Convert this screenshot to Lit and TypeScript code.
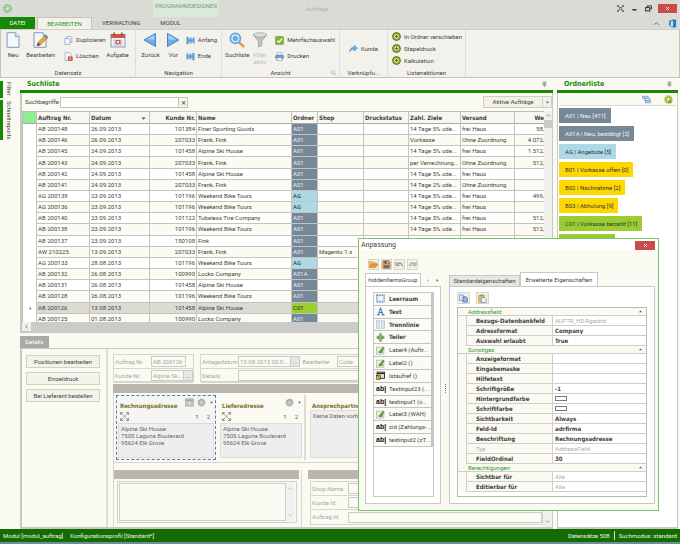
import { LitElement, html, css, svg, nothing, type TemplateResult } from "lit";
import { customElement } from "lit/decorators.js";
import { classMap } from "lit/directives/class-map.js";

const ICONS: Record<string, TemplateResult> = {
  gear: svg`<circle cx="8" cy="8" r="6.6" fill="none" stroke="#4bb356" stroke-width="1.8" stroke-dasharray="2.4 1.8"/><circle cx="8" cy="8" r="5.2" fill="#e9f5e6" stroke="#4bb356" stroke-width="1.4"/><circle cx="8" cy="8" r="2.2" fill="#fff" stroke="#4bb356" stroke-width="1.4"/>`,
  doc: svg`<path d="M2 .7h8.2L14 4.6v10.7H2z" fill="#f4f8fd" stroke="#8298b4"/><path d="M10.2.7v3.9H14" fill="#d6e2f0" stroke="#8298b4" stroke-width=".8"/>`,
  edit: svg`<path d="M1 .7h9L13 4v11.3H1z" fill="#f4f8fd" stroke="#8298b4"/><path d="M10 .7V4h3" fill="#d6e2f0" stroke="#8298b4" stroke-width=".8"/><path d="M4 14l1-3.6L12.6 3 15 5.4l-7.6 7.5z" fill="#f2a63b" stroke="#a4641a" stroke-width=".7"/><path d="M4 14l1-3.6 2.5 2.4z" fill="#555"/><path d="M11.3 4.2L12.6 3 15 5.4l-1.2 1.3z" fill="#5a86c8"/>`,
  copy: svg`<path d="M5 1h7l2 2v8H5z" fill="#e6effa" stroke="#6f8fbd"/><path d="M1.5 4.5h7l2 2v8.5h-9z" fill="#f3f8fe" stroke="#6f8fbd"/>`,
  del: svg`<path d="M2 1h8l3 3v11H2z" fill="#f1f6fc" stroke="#7e93b0"/><rect x="7" y="8" width="8.4" height="7.4" rx="1" fill="#d8402c"/><path d="M9.4 10l3.6 3.6M13 10l-3.6 3.6" stroke="#fff" stroke-width="1.3"/>`,
  calendar: svg`<rect x="1" y="2.5" width="14" height="12.5" fill="#eef2f7" stroke="#8093ad" stroke-width=".9"/><rect x="1" y="2" width="14" height="4" fill="#cf5645"/><path d="M4.2.4v3M11.8.4v3" stroke="#77584f" stroke-width="1.5"/><path d="M3 8.5h10M3 11h10M3 13.2h10M5 7v7M8 7v7M11 7v7" stroke="#b8c6d6" stroke-width=".7"/><rect x="5.6" y="8" width="5" height="4.2" fill="#d75b4a"/><rect x="7.1" y="9.2" width="2" height="1.8" fill="#fff"/>`,
  left: svg`<path d="M13.5 1.5v13L2 8z" fill="#6aaee8" stroke="#3b7cc2" stroke-width=".9"/><path d="M12.5 3v4.5H4.6z" fill="#a7d3f6"/>`,
  right: svg`<path d="M2.5 1.5v13L14 8z" fill="#6aaee8" stroke="#3b7cc2" stroke-width=".9"/><path d="M3.5 3v4.5h7.9z" fill="#a7d3f6"/>`,
  first: svg`<path d="M1.5 2h2.6v12H1.5zM9.2 2.5v11L4 8zM14.6 2.5v11L9 8z" fill="#6aaee8" stroke="#3b7cc2" stroke-width=".9"/>`,
  last: svg`<path d="M14.5 2h-2.6v12h2.6zM6.8 2.5v11L12 8zM1.4 2.5v11L7 8z" fill="#6aaee8" stroke="#3b7cc2" stroke-width=".9"/>`,
  search: svg`<path d="M10 10.2l4.4 4.2" stroke="#dd9455" stroke-width="2.4" stroke-linecap="round"/><circle cx="6.4" cy="6.4" r="5" fill="#d3ebfb" stroke="#6d9fd6" stroke-width="1.8"/><circle cx="6.4" cy="6.4" r="2.6" fill="#63aef0"/>`,
  funnel: svg`<path d="M1.5 3.2L6.4 9v6l3.4-1.5V9l4.7-5.8z" fill="#c2c2c2" stroke="#9a9a9a" stroke-width=".7"/><ellipse cx="8" cy="3" rx="6.6" ry="2.2" fill="#dedede" stroke="#9d9d9d" stroke-width=".8"/>`,
  check: svg`<rect x="1" y="1" width="14" height="14" rx="1" fill="#7fb93a" stroke="#5f9427"/><path d="M4 8.2l3 3.2 5.4-6.8" fill="none" stroke="#fff" stroke-width="2.2"/>`,
  print: svg`<path d="M4 1h8v5H4z" fill="#fff" stroke="#7e93c0"/><rect x="1" y="5.6" width="14" height="6.4" rx="2.4" fill="#7d98d2" stroke="#4a66a6"/><path d="M4 10h8l1 5H3z" fill="#f4f7fd" stroke="#6d80b0"/>`,
  share: svg`<path d="M1.4 14C1.2 8.4 4.4 5.6 9 5.6V2.2L15 7.4 9 12.4V9.2c-3.600-.1-5.900 1.200-7.600 4.800z" fill="#69b0e6" stroke="#3c80bb" stroke-width=".9"/>`,
  plus: svg`<circle cx="8" cy="8" r="7" fill="#a8c81e" stroke="#555f1a" stroke-width="1.6"/><circle cx="8" cy="8" r="4.600" fill="#f4f8d8" stroke="#5c6a18" stroke-width=".9"/><path d="M8 5v6M5 8h6" stroke="#4d7a12" stroke-width="1.9"/>`,
  launch: svg`<path d="M2 14V3h11" fill="none" stroke="#888" stroke-width="1.400"/><path d="M6 7l7 7M13 8v6H7" fill="none" stroke="#888" stroke-width="1.400"/>`,
  frame: svg`<path d="M1 4.500V1h3.500M11.500 1H15v3.500M15 11.500V15h-3.500M4.500 15H1v-3.500M1 1l4 4M15 1l-4 4M15 15l-4-4M1 15l4-4" fill="none" stroke="#444" stroke-width="1.500"/><rect x="5" y="5" width="6" height="6" fill="none" stroke="#444" stroke-width="1.400"/>`,
  min: svg`<path d="M3 11h10" stroke="#222" stroke-width="3"/>`,
  restore: svg`<path d="M5 5V2h10v7h-3" fill="none" stroke="#222" stroke-width="2"/><rect x="1.500" y="6" width="9.500" height="7.500" fill="none" stroke="#222" stroke-width="2.200"/>`,
  close: svg`<path d="M3 3l10 10M13 3L3 13" stroke="#fff" stroke-width="2.600"/>`,
  up: svg`<path d="M2.500 11L8 5.500l5.500 5.500" fill="none" stroke="#555" stroke-width="1.800"/>`,
  down: svg`<path d="M2.500 5L8 10.500 13.500 5" fill="none" stroke="#555" stroke-width="1.800"/>`,
  prev: svg`<path d="M11 2.500L5.500 8l5.500 5.500" fill="none" stroke="#444" stroke-width="2"/>`,
  office: svg`<path d="M2 3.500L10 .5l4.500 1.300v12.400L10 15.500 2 12.500l7 .7V3L5 4v7.200l-3 1.300z" fill="#1e7fd0"/>`,
  pin: svg`<path d="M4 2.500h8M5 3v6M10 3v6M3 9.500h10M8 10v4M8.600 3v6" fill="none" stroke="#777" stroke-width="1.600"/>`,
  caret: svg`<path d="M3 5.500h10L8 11z" fill="#555"/>`,
  caretUp: svg`<path d="M3 10.500h10L8 5z" fill="#555"/>`,
  marker: svg`<path d="M5 3v10l6-5z" fill="#666"/>`,
  markerL: svg`<path d="M11 3v10L5 8z" fill="#bbb"/>`,
  rows: svg`<rect x="1" y="2" width="10" height="4" fill="#a9cbe9" stroke="#5c94c8" stroke-width=".9"/><rect x="4" y="6" width="10" height="4" fill="#d5e6f5" stroke="#5c94c8" stroke-width=".9"/><rect x="6" y="10" width="9" height="4" fill="#a9cbe9" stroke="#5c94c8" stroke-width=".9"/>`,
  cog: svg`<circle cx="8" cy="8" r="6.200" fill="#b6cf4c" stroke="#8aa62d" stroke-width="2.600" stroke-dasharray="2.600 1.600"/><circle cx="8" cy="8" r="5.400" fill="#b6cf4c"/><circle cx="8" cy="8" r="2.600" fill="#fff" stroke="#7d9826"/><path d="M11 9v6M8.500 12.500h5" stroke="#5f9427" stroke-width="2"/>`,
  open: svg`<path d="M1 13.500V3h5l1.500 2H13v2.500" fill="#f6c264" stroke="#d0801d"/><path d="M1 13.500L4.500 7h11L12 13.500z" fill="#f2943a" stroke="#c96d14"/>`,
  save: svg`<path d="M1.500 1.500h11l2 2v11h-13z" fill="#f0a13a" stroke="#7b5a2e"/><rect x="4" y="1.500" width="7.500" height="5" fill="#5b5b62"/><rect x="3.500" y="9" width="9" height="5.500" fill="#5c6f8c"/><rect x="8.500" y="2.500" width="2" height="3" fill="#fff"/>`,
  undo: svg`<path d="M1.500 4v6h6L5.400 7.900C8 6 11.500 6.600 13 11.500 14.600 5.400 8.500 2 3.700 6.200z" fill="#bfbfb9" stroke="#77776f" stroke-width=".9"/>`,
  redo: svg`<path d="M14.500 4v6h-6l2.100-2.100C8 6 4.500 6.600 3 11.500 1.400 5.400 7.500 2 12.300 6.200z" fill="#cfcfc9" stroke="#85857d" stroke-width=".9"/>`,
  space: svg`<rect x="1.500" y="2" width="13" height="12" fill="#e8f1fa" stroke="#3f7cc0" stroke-width="1.800" stroke-dasharray="2 1"/>`,
  text: svg`<path d="M2 14h4M10 14h5M4 14L8 2l4.800 12M5.600 10h5.400" fill="none" stroke="#3b7fc4" stroke-width="1.900"/>`,
  split: svg`<rect x="1" y="1.500" width="14" height="13" fill="#dfe6ee" stroke="#9fb0c2"/><path d="M6 2v12M10 2v12" stroke="#8ea3ba" stroke-width="1.200"/><rect x="6.600" y="2" width="2.800" height="12" fill="#fff"/>`,
  divide: svg`<path d="M6.500 1h3v14h-3z" fill="#9fb3a1" stroke="#6d846f"/><path d="M.5 8L5 4.500v7zM15.500 8L11 4.500v7z" fill="#68aa4a" stroke="#4b8630" stroke-width=".7"/><rect x="3" y="6.800" width="10" height="2.400" fill="#68aa4a"/>`,
  label: svg`<rect x="1" y="2" width="13" height="12.500" fill="#fbf3ae" stroke="#8aa4bd"/><path d="M3 12.500h9v-5z" fill="#5b9fd0"/><path d="M5 10.500L12.500 2l2.200 1.800L7.500 12z" fill="#5aa53f" stroke="#3b6f2a" stroke-width=".7"/>`,
  lookup: svg`<rect x="2" y="2" width="13" height="11" fill="#e8e4d2" stroke="#222" stroke-width="1.600"/><path d="M2 4.500h13" stroke="#222" stroke-width="2"/><rect x="1" y="7.500" width="7" height="7.500" fill="#f4e11c" stroke="#222"/><path d="M3 9.500h2v3.500h3" stroke="#222" fill="none"/>`,
  pages: svg`<path d="M1 1.500h6L9 4v7.500H1z" fill="#dfeafb" stroke="#3f6fb8"/><path d="M7 5h6l2 2.500v7H7z" fill="#8fb3e6" stroke="#2b5ca6"/>`,
  paste: svg`<rect x="1.500" y="2.500" width="10" height="12" fill="#f2b964" stroke="#b77a26"/><rect x="4" y="1" width="5" height="3" fill="#8d8d8d"/><path d="M6 6h6l2.500 2.500V15H6z" fill="#eaf2fc" stroke="#5079b2"/>`,
  expand: svg`<path d="M1 5V1h4M1 1l5 5M11 1h4v4M15 1l-5 5M15 11v4h-4M15 15l-5-5M5 15H1v-4M1 15l5-5" fill="none" stroke="#888" stroke-width="1.700"/><rect x="6" y="6" width="4" height="4" fill="#bbb"/>`,
  photo: svg`<rect x="1" y="1.500" width="14" height="13" fill="#c9c9c5" stroke="#9b9b97"/><path d="M1 4h14" stroke="#9b9b97" stroke-width="1.600"/><circle cx="8" cy="9" r="3" fill="#eee" stroke="#999"/>`,
  disc: svg`<circle cx="8" cy="8" r="5.800" fill="#b9b9b5" stroke="#a3a39f" stroke-width="2.400" stroke-dasharray="2.600 1.400"/><circle cx="8" cy="8" r="2.200" fill="#d6d6d2"/>`,
};

const icon = (name: string, cls = "i9") =>
  html`<svg class=${"icon " + cls} viewBox="0 0 16 16" aria-hidden="true">${ICONS[name]}</svg>`;

const D5 = "14 Tage 5% ode...";
const FH = "frei Haus";
const OZ = "Ohne Zuordnung";
const ROWS: string[][] = [
  ["AB 200148", "26.09.2013", "101384", "Finer Sporting Goods", "A01", "", D5, FH, "58,"],
  ["AB 200146", "26.09.2013", "207033", "Frank, Fink", "A01", "", "Vorkasse", OZ, "4.072,"],
  ["AB 200145", "24.09.2013", "101458", "Alpine Ski House", "A01", "", D5, FH, "1.512,"],
  ["AB 200143", "24.09.2013", "207033", "Frank, Fink", "A01", "", "per Verrechnung...", OZ, "512,"],
  ["AB 200142", "24.09.2013", "101458", "Alpine Ski House", "A01", "", D5, FH, ""],
  ["AB 200141", "24.09.2013", "207033", "Frank, Fink", "A01", "", "14 Tage 2% ode...", OZ, ""],
  ["AG 200139", "23.09.2013", "101196", "Weekend Bike Tours", "AG", "", D5, FH, "499,"],
  ["AG 200136", "23.09.2013", "101196", "Weekend Bike Tours", "AG", "", D5, FH, ""],
  ["AB 200140", "23.09.2013", "101122", "Tubeless Tire Company", "A01", "", D5, FH, "512,"],
  ["AB 200138", "23.09.2013", "101196", "Weekend Bike Tours", "A01", "", D5, FH, "512,"],
  ["AB 200137", "23.09.2013", "150108", "Fink", "A01", "", "", "", ""],
  ["AW 210225", "13.09.2013", "207033", "Frank, Fink", "A01", "Magento 1.x", "", "", ""],
  ["AG 200133", "28.08.2013", "101196", "Weekend Bike Tours", "AG", "", "", "", ""],
  ["AB 200132", "26.08.2013", "100990", "Locks Company", "A01A", "", "", "", ""],
  ["AB 200131", "26.08.2013", "101458", "Alpine Ski House", "A01", "", "", "", ""],
  ["AB 200128", "26.08.2013", "101196", "Weekend Bike Tours", "A01", "", "", "", ""],
  ["AB 200126", "13.08.2013", "101458", "Alpine Ski House", "C01", "", "", "", ""],
  ["AB 200125", "01.08.2013", "100990", "Locks Company", "A01", "", "", "", ""],
];
const SELECTED = "AB 200126";

const FOLDERS: [string, string][] = [
  ["A01 | Neu [471]", "slate"],
  ["A01A | Neu, bestätigt [2]", "slate"],
  ["AG | Angebote [5]", "sky"],
  ["B01 | Vorkasse offen [0]", "gold"],
  ["B02 | Nachnahme [2]", "gold"],
  ["B03 | Abholung [9]", "gold"],
  ["C01 | Vorkasse bezahlt [11]", "lime"],
  ["", "lime"],
];

const TOOLS: [string, string, boolean][] = [
  ["space", "Leerraum", true],
  ["text", "Text", true],
  ["split", "Trennlinie", true],
  ["divide", "Teiler", true],
  ["label", "Label4 (Auftr...", false],
  ["label", "Label2 ()", false],
  ["lookup", "lstaufref ()", false],
  ["ab", "Textinput23 (...", false],
  ["ab", "textinput1 (v...", false],
  ["label", "Label3 (WAH)", false],
  ["ab", "zid (Zahlungs-...", false],
  ["ab", "textinput2 (zT...", false],
];

type Prop = [string, string, string?];
const PROPS: [string, Prop[]][] = [
  ["Addressfield", [["Bezugs-Datenbankfeld", "AUFTR_HD.Rgadrid", "mutedval"], ["Adressformat", "Company"], ["Auswahl erlaubt", "True"]]],
  ["Sonstiges", [
    ["Anzeigeformat", ""], ["Eingabemaske", ""], ["Hilfetext", ""], ["Schriftgröße", "-1"],
    ["Hintergrundfarbe", "", "swatch"], ["Schriftfarbe", "", "swatch"], ["Sichtbarkeit", "Always"],
    ["Feld-Id", "adrfirma"], ["Beschriftung", "Rechnungsadresse"], ["Typ", "AddressField", "muted"], ["FieldOrdinal", "30"],
  ]],
  ["Berechtigungen", [["Sichtbar für", "Alle", "mutedval"], ["Editierbar für", "Alle", "mutedval"]]],
];

const base = css`
  :host {
    --line: #c9c9c3;
    --green: #178a05;
    --paper: #faf9f2;
    font: 6px/8px Roboto, "Liberation Sans", sans-serif;
    color: #3f3f3d;
  }
  * { box-sizing: border-box; }
  button, input, textarea {
    font: inherit; color: inherit; margin: 0; padding: 0; border: 0;
    background: none; border-radius: 0; min-width: 0; outline: 0;
  }
  button { white-space: nowrap; }
  .icon { display: block; flex: none; width: 9px; height: 9px; }
  .i5 { width: 5px; height: 5px; }
  .i7 { width: 7px; height: 7px; }
  .i16 { width: 16px; height: 16px; }
  .bold, th { font-family: "DejaVu Sans Condensed", "DejaVu Sans", sans-serif; font-weight: bold; }
  table { border-collapse: separate; border-spacing: 0; table-layout: fixed; width: 100%; }
  .grow { flex: 1; min-width: 0; }
`;

@customElement("ribbon-bar")
export class RibbonBar extends LitElement {
  static styles = [base, css`
    :host { display: block; background: #dbdad4; }
    .title { display: flex; height: 17px; position: relative; align-items: center; padding: 0 3px; }
    .title .context {
      margin-left: 141px; width: 66px; align-self: stretch; background: #dbe9da; color: #7b9a7a;
      display: flex; align-items: center; justify-content: center; padding-bottom: 5px;
    }
    .caption { position: absolute; left: 0; right: 0; text-align: center; color: #b5b4ae; padding-right: 46px; top: 5px; }
    .win { display: flex; align-items: center; gap: 5px; }
    .win button { display: grid; place-items: center; width: 9px; height: 9px; }
    .win .x { background: #c94b4b; width: 19px; }
    .tabs { display: flex; height: 12px; align-items: stretch; }
    .tabs button { padding: 0 10px; }
    .tabs .file { background: #168803; color: #fff; width: 35px; margin-right: 2px; padding: 0; }
    .tabs .on { background: #f2f1ec; border: 1px solid #c4c3bc; border-bottom: 0; color: #2d9a22; width: 55px; padding: 0; }
    .tools { display: flex; align-items: center; gap: 8px; margin-left: auto; padding-right: 3px; }
    .tools button { padding: 0; }
    .ribbon { display: flex; height: 49px; background: #f2f1ec; border: 1px solid #c4c3bc; border-top-color: #d0cfc9; }
    .group { display: flex; flex-direction: column; border-right: 1px solid #dfded8; padding: 2px 4px 0; position: relative; }
    .items { display: flex; flex: 1; }
    .items > button, .stack button { display: flex; }
    .big { flex-direction: column; align-items: center; gap: 3px; text-align: center; line-height: 7px; }
    .big:disabled { color: #bdbcb6; }
    .stack { display: flex; flex-direction: column; justify-content: space-around; }
    .stack button { align-items: center; gap: 3px; }
    .name { text-align: center; height: 8px; line-height: 8px; }
    .g1 { width: 135px; } .g2 { width: 86px; } .g3 { width: 118px; } .g4 { width: 48px; } .g5 { width: 78px; }
    .w1 { width: 17px; } .w2 { width: 40px; } .w3 { width: 28px; } .w4 { width: 26px; } .w5 { width: 22px; }
    .s1 { width: 44px; } .s2 { padding-left: 4px; }
    .two { height: 32px; }
    .three { gap: 3px; justify-content: flex-start; }
    .mid { margin: auto; padding-bottom: 4px; }
    .corner { position: absolute; right: 3px; bottom: 2px; }
  `];
  big(name: string, label: string | TemplateResult, cls: string, off = false, size = "i16") {
    return html`<button class=${"big " + cls} ?disabled=${off}>${icon(name, size)}<span>${label}</span></button>`;
  }
  small(name: string, label: string) {
    return html`<button>${icon(name)}<span>${label}</span></button>`;
  }
  render() {
    return html`
      <div class="title">
        ${icon("gear")}
        <span class="context">PROGRAMMDESIGNER</span>
        <span class="caption">Aufträge</span>
        <span class="grow"></span>
        <span class="win">
          <button aria-label="Vollbild">${icon("frame", "i7")}</button>
          <button aria-label="Minimieren">${icon("min", "i7")}</button>
          <button aria-label="Wiederherstellen">${icon("restore", "i7")}</button>
          <button class="x" aria-label="Schließen">${icon("close", "i5")}</button>
        </span>
      </div>
      <nav class="tabs">
        <button class="file">DATEI</button>
        <button class="on">BEARBEITEN</button>
        <button>VERWALTUNG</button>
        <button>MODUL</button>
        <span class="tools">
          <button aria-label="Menüband">${icon("up", "i7")}</button>
          <button aria-label="Office">${icon("office")}</button>
        </span>
      </nav>
      <div class="ribbon">
        <section class="group g1">
          <div class="items">
            ${this.big("doc", "Neu", "w1")}
            ${this.big("edit", "Bearbeiten", "w2")}
            <div class="stack two s1 s2">${this.small("copy", "Duplizieren")}${this.small("del", "Löschen")}</div>
            ${this.big("calendar", "Aufgabe", "w3")}
          </div>
          <div class="name">Datensatz</div>
        </section>
        <section class="group g2">
          <div class="items">
            ${this.big("left", "Zurück", "w5")}
            ${this.big("right", "Vor", "w4")}
            <div class="stack two">${this.small("first", "Anfang")}${this.small("last", "Ende")}</div>
          </div>
          <div class="name">Navigation</div>
        </section>
        <section class="group g3">
          <div class="items">
            ${this.big("search", "Suchliste", "w4")}
            ${this.big("funnel", html`Filter<br />aktiv`, "w4", true)}
            <div class="stack two s2">${this.small("check", "Mehrfachauswahl")}${this.small("print", "Drucken")}</div>
          </div>
          <div class="name">Ansicht</div>
          <button class="corner" aria-label="Ansicht Optionen">${icon("launch", "i5")}</button>
        </section>
        <section class="group g4">
          <div class="items"><div class="stack mid">${this.small("share", "Kunde")}</div></div>
          <div class="name">Verknüpfu...</div>
        </section>
        <section class="group g5">
          <div class="items">
            <div class="stack three">${this.small("plus", "In Ordner verschieben")}${this.small("plus", "Stapeldruck")}${this.small("plus", "Kalkulation")}</div>
          </div>
          <div class="name">Listenaktionen</div>
        </section>
      </div>`;
  }
}

@customElement("order-list")
export class OrderList extends LitElement {
  static styles = [base, css`
    :host { display: block; background: var(--paper); border: solid var(--line); border-width: 0 1px 2px 2px; }
    .bar { display: flex; align-items: center; height: 18px; padding-left: 3px; }
    .bar label { width: 35px; }
    .find { display: flex; width: 128px; height: 11px; border: 1px solid #c3c3bd; background: #fff; }
    .find input { flex: 1; padding: 0 2px; }
    .find button { width: 9px; border-left: 1px solid #c3c3bd; color: #1d8f10; font-weight: bold; line-height: 7px; background: #f5f5ef; }
    .view { display: flex; margin-left: auto; height: 12px; border: 1px solid #cfcebc; background: #f1f0ea; }
    .view button { width: 58px; }
    .view .drop { width: 9px; border-left: 1px solid #cfcebc; display: grid; place-items: center; }
    .area { display: grid; grid-template-columns: minmax(0, 1fr) 8px; }
    .clip { height: 211px; overflow: hidden; border-top: 1px solid #bdbdb7; border-left: 1px solid #bdbdb7; background: #fff; }
    table { height: 213px; }
    th, td { padding: 0 1px; text-align: left; white-space: nowrap; overflow: hidden; border: solid #c4c4be; border-width: 0 1px 1px 0; }
    th { background: #f7f6f0; height: 12px; border-bottom-color: #aaa; }
    th .icon { float: right; margin: 1px 1px 0 0; }
    td { height: 11px; line-height: 8px; }
    td:first-child { border-bottom: 0; background: #fff; }
    td:first-child .icon { margin-left: 4px; }
    th:first-child { background: #90ee90; }
    tr:nth-child(even) td:not(:first-child) { background: #fcfbf3; }
    tr.sel td:not(:first-child):not(.order) { background: #dcdbd3; }
    tr td.order.slate:not(:first-child) { background: #778899; color: #e8edf2; }
    tr td.order.AG:not(:first-child) { background: #add8e6; color: #222; }
    tr td.order.C01:not(:first-child) { background: #9acd32; color: #222; }
    .num { text-align: right; }
    .cut { padding-right: 0; border-right: 0; }
    .c0 { width: 14px; } .c1 { width: 53px; } .c2 { width: 60px; } .c3 { width: 47px; } .c5 { width: 26px; }
    .c6 { width: 46px; } .c7 { width: 45px; } .c8 { width: 52px; } .c9 { width: 54px; } .c10 { width: 29px; }
    .vs { background: #efefeb; display: flex; flex-direction: column; }
    .vs span { height: 9px; display: grid; place-items: center; }
    .vs i { height: 8px; background: #c9c9c9; }
    .hs { grid-column: 1 / -1; height: 9px; display: flex; background: #efefeb; padding-right: 18px; }
    .hs span { width: 9px; display: grid; place-items: center; }
    .hs i { flex: 1; background: #cbcbcb; }
  `];
  render() {
    return html`
      <div class="bar">
        <label for="q">Suchbegriffe</label>
        <div class="find"><input id="q" /><button aria-label="Leeren">✕</button></div>
        <div class="view"><button>Aktive Aufträge</button><button class="drop" aria-label="Auswahl">${icon("caret", "i5")}</button></div>
      </div>
      <div class="area">
        <div class="clip">
          <table>
            <colgroup>
              <col class="c0" /><col class="c1" /><col class="c2" /><col class="c3" /><col /><col class="c5" />
              <col class="c6" /><col class="c7" /><col class="c8" /><col class="c9" /><col class="c10" />
            </colgroup>
            <thead>
              <tr>
                <th></th><th>Auftrag Nr.</th><th>Datum ${icon("caret", "i7")}</th><th class="num">Kunde Nr.</th><th>Name</th>
                <th>Ordner</th><th>Shop</th><th>Druckstatus</th><th>Zahl. Ziele</th><th>Versand</th><th class="num cut">We</th>
              </tr>
            </thead>
            <tbody>
              ${ROWS.map(([nr, date, cust, name, order, shop, pay, ship, value]) => html`
                <tr class=${classMap({ sel: nr === SELECTED })}>
                  <td>${nr === SELECTED ? icon("marker", "i5") : nothing}</td>
                  <td>${nr}</td><td>${date}</td><td class="num">${cust}</td><td>${name}</td>
                  <td class=${"order " + (order.startsWith("A0") ? "slate" : order)}>${order}</td>
                  <td>${shop}</td><td></td><td>${pay}</td><td>${ship}</td><td class="num cut">${value}</td>
                </tr>`)}
            </tbody>
          </table>
        </div>
        <div class="vs"><span>${icon("up", "i5")}</span><i></i></div>
        <div class="hs"><span>${icon("prev", "i5")}</span><i></i></div>
      </div>`;
  }
}

@customElement("order-details")
export class OrderDetails extends LitElement {
  static styles = [base, css`
    :host { display: flex; flex-direction: column; flex: 1; min-height: 0; color: #a9a9a3; }
    .tab { align-self: flex-start; width: 29px; height: 12px; background: #a9a9a7; color: #fff; margin-top: 3px; }
    .body { flex: 1; display: flex; min-height: 0; overflow: hidden; border: solid var(--line); border-width: 1px 1px 2px 2px; background: var(--paper); }
    .actions { width: 86px; display: flex; flex-direction: column; gap: 4px; padding: 6px 6px 0 4px; border-right: 2px solid #dcdbd4; }
    .actions button { height: 13px; border: 1px solid #d3d2bd; background: #f3f2ec; color: #3f3f3d; }
    .pane { flex: 1; min-width: 0; display: flex; flex-direction: column; padding: 5px 0 0 5px; }
    .heads { display: flex; gap: 6px; height: 28px; }
    .set { display: grid; grid-template-rows: 14px 14px; border: 1px solid #d6d5ce; }
    .set > div { display: flex; align-items: center; border-bottom: 1px solid #d6d5ce; }
    .s1 { width: 81px; } .s2 { flex: 1; border-right: 0; }
    label { flex: none; width: 37px; padding-left: 1px; }
    .in { display: flex; border: 1px solid #cbcac4; height: 11px; background: var(--paper); }
    .in input { flex: 1; padding: 0 1px; }
    .in button { width: 9px; background: #e6e6e2; border-left: 1px solid #cbcac4; color: #555; line-height: 6px; }
    .a { width: 35px; } .b { width: 42px; } .c { width: 62px; } .d { flex: 1; }
    .band { height: 9px; background: #b8b6ae; flex: none; }
    .gap { margin-top: 2px; }
    .cards { display: flex; gap: 2px; height: 70px; padding: 2px 0 2px 2px; border-left: 1px solid #d6d5ce; border-bottom: 1px solid #d6d5ce; }
    .card { width: 88px; height: 65px; padding: 2px; border-right: 2px solid #dcdbd4; display: flex; flex-direction: column; color: #666; }
    .card.focus { width: 100px; border: 1px dashed #4c7ebd; background: #f5f5f1; padding: 1px; }
    .card.rest { flex: 1; }
    .top { display: flex; align-items: center; gap: 3px; height: 13px; padding-left: 2px; }
    .top .bold { flex: 1; color: #7c722e; padding-top: 5px; white-space: nowrap; }
    .top .icon { margin-bottom: 3px; }
    .sub { display: flex; align-items: center; height: 13px; padding: 0 4px 0 2px; gap: 8px; }
    .addr { flex: 1; background: #eee; border: 1px solid #dddcd8; padding: 1px 2px; line-height: 7px; }
    .low { display: flex; gap: 6px; flex: 1; padding-top: 7px; border-left: 1px solid #d6d5ce; }
    .left { width: 188px; padding-right: 2px; border-right: 1px solid #d6d5ce; }
    .right { flex: 1; }
    .memo { display: flex; margin: 2px 2px 0 3px; height: 42px; border: 1px solid #cfcec8; padding: 1px; background: var(--paper); }
    .memo textarea { flex: 1; resize: none; border: 1px solid #cfcec8; }
    .memo span { width: 9px; background: #efefef; display: flex; flex-direction: column; justify-content: space-between; align-items: center; padding: 3px 0; opacity: .6; }
    .ids { margin: 2px 0 0 2px; border: 1px solid #d6d5ce; }
    .ids div { display: flex; height: 14px; align-items: center; border-bottom: 1px solid #d6d5ce; }
    .ids div:last-child { border: 0; }
    .vs { width: 9px; background: #efefeb; display: flex; flex-direction: column; justify-content: flex-end; align-items: center; padding-bottom: 3px; }
  `];
  render() {
    return html`
      <button class="tab">Details</button>
      <div class="body">
        <div class="actions">
          <button>Positionen bearbeiten</button><button>Einzeldruck</button><button>Bei Lieferant bestellen</button>
        </div>
        <div class="pane">
          <div class="heads">
            <div class="set s1">
              <div><label for="nr">Auftrag Nr.</label><span class="in a"><input id="nr" value="AB 200126" /></span></div>
              <div><label for="kd">Kunde Nr.</label><span class="in b"><input id="kd" value="Alpine Sk..." /><button>...</button></span></div>
            </div>
            <div class="set s2">
              <div>
                <label for="dt">Anlagedatum</label><span class="in c"><input id="dt" value="13.08.2013 00:0..." /><button>...</button></span>
                <label for="bb">&nbsp;Bearbeiter</label><span class="in d"><input id="bb" value="Code" /></span>
              </div>
              <div><label for="de">Details</label><span class="in d"><input id="de" /></span></div>
            </div>
          </div>
          <div class="band gap"></div>
          <div class="cards">
            <section class="card focus">
              <div class="top"><span class="bold">Rechnungsadresse</span>${icon("photo")}${icon("disc")}${icon("caret", "i5")}</div>
              <div class="sub">${icon("expand")}<span class="grow"></span><span>1</span><span>2</span></div>
              <div class="addr">Alpine Ski House<br />7505 Laguna Boulevard<br />95624 Elk Grove</div>
            </section>
            <section class="card">
              <div class="top"><span class="bold">Lieferadresse</span>${icon("disc")}${icon("caret", "i5")}</div>
              <div class="sub">${icon("expand")}<span class="grow"></span><span>1</span><span>2</span></div>
              <div class="addr">Alpine Ski House<br />7505 Laguna Boulevard<br />95624 Elk Grove</div>
            </section>
            <section class="card rest">
              <div class="top"><span class="bold">Ansprechpartner</span></div>
              <div class="addr">Keine Daten vorhanden</div>
            </section>
          </div>
          <div class="low">
            <div class="left">
              <div class="band"></div>
              <div class="memo"><textarea aria-label="Notiz"></textarea><span>${icon("up", "i5")}${icon("down", "i5")}</span></div>
            </div>
            <div class="right">
              <div class="band"></div>
              <div class="ids">
                <div><label for="sn">Shop-Name</label><span class="in d"><input id="sn" /></span></div>
                <div><label for="ki">Kunde Id</label><span class="in d"><input id="ki" /></span></div>
                <div><label for="ai">Auftrag Id</label><span class="in d"><input id="ai" /></span></div>
              </div>
            </div>
          </div>
        </div>
        <div class="vs">${icon("down", "i5")}</div>
      </div>`;
  }
}

@customElement("adjust-dialog")
export class AdjustDialog extends LitElement {
  static styles = [base, css`
    :host { display: block; border: 1px solid #7cc06e; background: var(--paper); }
    header { display: flex; height: 11px; align-items: center; background: #fff; padding: 1px 3px 0 2px; font-size: 7px; }
    header button { margin-left: auto; width: 20px; height: 9px; background: #c94b4b; display: grid; place-items: center; }
    .bar { display: flex; gap: 2px; padding: 9px 0 0 9px; }
    .bar button, .pair button { width: 11px; height: 11px; border: 1px solid #d8d7c6; background: #f3f2ea; display: grid; place-items: center; }
    .cols { display: flex; padding: 2px 3px 6px 6px; }
    .tabs { display: flex; height: 14px; align-items: flex-end; }
    .tabs button { border: 1px solid var(--line); border-bottom: 0; height: 11px; background: #e7e6e1; width: 71px; }
    .tabs .on { background: #fff; height: 14px; width: 78px; }
    .left { width: 76px; }
    .left .tabs .on { width: 56px; height: 13px; }
    .left .tabs { gap: 2px; }
    .left .tabs .nav { border: 0; background: none; width: 8px; display: grid; place-items: center; }
    .sheet { background: #fff; border: 1px solid var(--line); height: 218px; }
    .left .sheet { padding: 5px 6px 6px 7px; }
    .list { border: 1px solid var(--line); height: 100%; }
    .stack { display: grid; height: 154px; grid-auto-rows: 1fr; }
    .stack button { display: flex; align-items: center; gap: 4px; padding: 0 1px 0 2px; border: solid #c4c4be; border-width: 0 2px 1px 0; background: #fbfaf5; text-align: left; }
    .ab { flex: none; width: 9px; font: bold 7px/8px "Liberation Sans", sans-serif; color: #111; }
    .grip { width: 8px; display: flex; flex-direction: column; justify-content: center; align-items: center; gap: 1px; }
    .grip i { width: 1px; height: 1px; background: #777; }
    .right { flex: 1; min-width: 0; }
    .right .sheet { padding: 5px 7px 6px; display: flex; flex-direction: column; }
    .pair { display: flex; gap: 6px; padding-bottom: 3px; }
    .pair button { width: 13px; height: 12px; }
    .props { flex: 1; border: 1px solid #b9b9b3; }
    th, td { border: solid #cfcec8; border-width: 0 1px 1px 0; padding: 0 0 0 2px; height: 10px; line-height: 8px; text-align: left; white-space: nowrap; overflow: hidden; }
    td:last-child, td.cat { border-right: 0; }
    td.pad { background: var(--paper); border-bottom: 0; }
    th { background: var(--paper); padding-left: 9px; }
    td.cat { height: 8px; line-height: 7px; background: var(--paper); color: #2f9a28; padding-left: 10px; }
    .cat .icon { float: right; margin: 1px 3px 0 0; }
    .muted th, .muted td, td.mutedval { color: #aaa; font-weight: normal; }
    .muted th, .muted td { font-family: inherit; }
    .swatch { display: block; width: 12px; height: 5px; border: 1px solid #777; }
    .p0 { width: 9px; } .p1 { width: 86px; }
  `];
  render() {
    return html`
      <header><span>Anpassung</span><button aria-label="Schließen">${icon("close", "i5")}</button></header>
      <div class="bar">
        ${[["open", "Öffnen"], ["save", "Speichern"], ["undo", "Rückgängig"], ["redo", "Wiederholen"]].map(
          ([n, l]) => html`<button aria-label=${l}>${icon(n)}</button>`)}
      </div>
      <div class="cols">
        <div class="left">
          <div class="tabs">
            <button class="on">hiddenItemsGroup</button>
            <button class="nav" aria-label="Zurück">${icon("markerL", "i5")}</button>
            <button class="nav" aria-label="Weiter">${icon("marker", "i5")}</button>
          </div>
          <div class="sheet"><div class="list"><div class="stack">
            ${TOOLS.map(([n, l, b]) => html`
              <button>${n === "ab" ? html`<b class="ab">ab|</b>` : icon(n)}<span class=${b ? "bold" : ""}>${l}</span></button>`)}
          </div></div></div>
        </div>
        <div class="grip">${[1, 2, 3, 4, 5].map(() => html`<i></i>`)}</div>
        <div class="right">
          <div class="tabs"><button>Standardeigenschaften</button><button class="on">Erweiterte Eigenschaften</button></div>
          <div class="sheet">
            <div class="pair"><button aria-label="Kopieren">${icon("pages")}</button><button aria-label="Einfügen">${icon("paste")}</button></div>
            <div class="props">
              <table>
                <colgroup><col class="p0" /><col class="p1" /><col /></colgroup>
                ${PROPS.map(([cat, rows]) => html`
                  <tbody>
                    <tr><td class="cat" colspan="3">${icon("caretUp", "i5")}${cat}</td></tr>
                    ${rows.map(([k, v, kind]) => html`
                      <tr class=${kind === "muted" ? "muted" : ""}>
                        <td class="pad"></td><th scope="row">${k}</th>
                        <td class=${kind === "mutedval" ? "mutedval" : "bold"}>${kind === "swatch" ? html`<span class="swatch"></span>` : v}</td>
                      </tr>`)}
                  </tbody>`)}
              </table>
            </div>
          </div>
        </div>
      </div>`;
  }
}

@customElement("app-root")
export class AppRoot extends LitElement {
  static styles = [base, css`
    :host { display: flex; flex-direction: column; min-height: 100vh; position: relative; background: var(--paper); overflow: hidden; }
    .work { flex: 1; display: flex; padding-right: 2px; }
    .side { width: 20px; display: flex; flex-direction: column; gap: 2px; padding-top: 3px; }
    .side button { writing-mode: vertical-rl; border-left: 3px solid var(--green); text-align: left; width: 14px; padding-top: 1px; }
    .side .f { height: 17px; } .side .s { height: 40px; }
    .main { flex: 1; min-width: 0; display: flex; flex-direction: column; }
    .folders { width: 121px; margin-left: 4px; display: flex; flex-direction: column; }
    .head { display: flex; align-items: center; height: 15px; padding: 0 5px 0 7px; border-bottom: 3px solid var(--green); }
    .head h2 { margin: 0; font-size: 7px; line-height: 10px; color: var(--green); flex: 1; }
    .box { flex: 1; background: #fff; border: solid var(--line); border-width: 0 1px 2px 1px; padding: 0 1px; }
    .tools { display: flex; justify-content: flex-end; align-items: center; gap: 13px; height: 13px; padding-right: 3px; background: var(--paper); border-bottom: 1px solid #dddcd6; }
    .tags { display: flex; flex-direction: column; align-items: flex-start; gap: 3px; padding-top: 2px; }
    .tags button { height: 15px; padding: 0 5px 0 6px; min-width: 56px; color: #333; }
    .tags button.slate { background: #778899; color: #f0f3f6; min-width: 51px; }
    .tags button.sky { background: #add8e6; }
    .tags button.gold { background: #ffd700; }
    .tags button.lime { background: #9acd32; }
    adjust-dialog { position: absolute; top: 238px; right: 21px; width: 301px; }
    footer { display: flex; align-items: center; gap: 7px; height: 15px; padding: 0 3px; background: #146c00; color: #eef5ec; border-bottom: 2px solid #6f8f94; }
    footer .sep { width: 1px; height: 9px; background: #cfe2ca; }
    footer .end { gap: 4px; display: flex; align-items: center; margin-left: auto; }
  `];
  render() {
    return html`
      <ribbon-bar></ribbon-bar>
      <div class="work">
        <nav class="side"><button class="f">Filter</button><button class="s">Schnellreports</button></nav>
        <main class="main">
          <div class="head"><h2 class="bold">Suchliste</h2>${icon("pin", "i7")}</div>
          <order-list></order-list>
          <order-details></order-details>
        </main>
        <aside class="folders">
          <div class="head"><h2 class="bold">Ordnerliste</h2>${icon("pin", "i7")}</div>
          <div class="box">
            <div class="tools">${icon("rows")}${icon("cog")}</div>
            <div class="tags">${FOLDERS.map(([label, tone]) => html`<button class=${tone}>${label}</button>`)}</div>
          </div>
        </aside>
      </div>
      <footer>
        <span>Modul [modul_auftrag]</span><span>Konfigurationsprofil [Standard*]</span>
        <span class="end"><span>Datensätze 508</span><span class="sep"></span><span>Suchmodus: standard</span></span>
      </footer>
      <adjust-dialog></adjust-dialog>`;
  }
}
